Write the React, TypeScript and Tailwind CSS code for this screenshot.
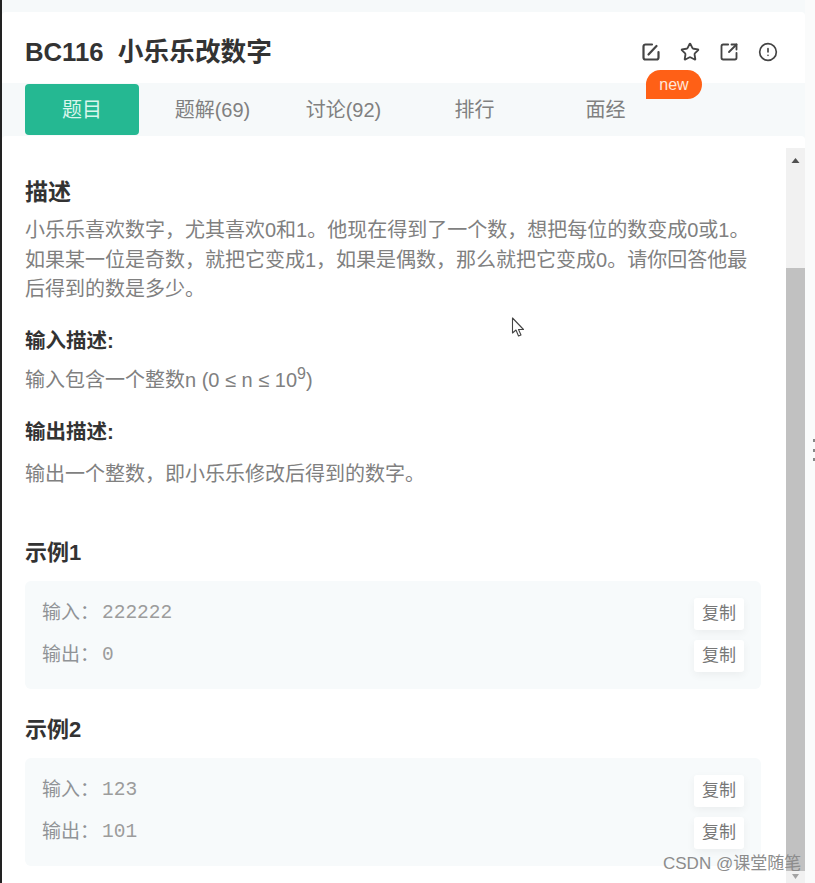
import { Star, SquareArrowOutUpRight, CircleAlert } from 'lucide-react';

const font = { fontFamily: '"Liberation Sans", "Noto Sans CJK SC", sans-serif' };

const tabs = ['题解(69)', '讨论(92)', '排行', '面经'];

const EditIcon = () => (
  <svg viewBox="0 0 20 20" className="h-[20px] w-[20px]" fill="none" stroke="currentColor" strokeWidth="2.200" strokeLinecap="round" strokeLinejoin="round">
    <path d="M11 2.500 H4.500 a2 2 0 0 0 -2 2 V15.500 a2 2 0 0 0 2 2 H15.500 a2 2 0 0 0 2 -2 V10" />
    <path d="M7.500 12.500 L15.500 4" />
  </svg>
);

const SampleRow = ({ label, value }: { label: string; value: string }) => (
  <div className="flex h-[42px] items-center justify-between">
    <div className="flex items-center text-[19px] text-[#909396]">
      <span className="w-[60px]">{label}：</span>
      <span className="font-['Liberation_Mono',monospace] text-[19.500px] text-[#9c9c9c]">{value}</span>
    </div>
    <button className="h-[32px] w-[50px] rounded-[3px] bg-white text-[17px] text-[#777] shadow-[0_3px_8px_rgba(0,0,0,0.05)]">
      复制
    </button>
  </div>
);

const Sample = ({ title, input, output }: { title: string; input: string; output: string }) => (
  <div>
    <h3 className="text-[22px] leading-[28px] font-bold text-[#333]">{title}</h3>
    <div className="mt-[14px] rounded-[6px] bg-[#f7fafb] pt-[12px] pb-[12px] pl-[17px] pr-[17px]">
      <SampleRow label="输入" value={input} />
      <SampleRow label="输出" value={output} />
    </div>
  </div>
);

export default function App() {
  return (
    <div style={font} className="relative h-[883px] w-[815px] overflow-hidden bg-[#fafbfb]">
      <div className="mr-[10px] flex h-full flex-col border-l-2 border-[#222] bg-[#f6f9fa] pt-[12px]">
        {/* title bar */}
        <div className="relative flex h-[71px] shrink-0 items-center justify-between rounded-t-[4px] bg-white pl-[23px] pr-[27px] pt-[9px]">
          <h1 className="text-[25.700px] font-bold text-[#333]">BC116&nbsp; 小乐乐改数字</h1>
          <div className="flex items-center gap-[19px] text-[#444]">
            <EditIcon />
            <Star size={20} strokeWidth={2.200} />
            <SquareArrowOutUpRight size={20} strokeWidth={2.200} />
            <CircleAlert size={20} strokeWidth={2} />
          </div>
          <span className="absolute left-[644px] top-[58px] z-10 flex h-[29px] w-[56px] items-center justify-center rounded-t-[15px] rounded-br-[15px] bg-[#ff6016] text-[16px] text-[#ffe6d8]">
            new
          </span>
        </div>

        {/* tabs */}
        <div className="flex h-[53px] shrink-0 items-stretch pl-[23px]">
          <div className="my-[1px] flex w-[114px] items-center justify-center rounded-[4px] bg-[#25b892] text-[20px] text-[#d9f5ec]">
            题目
          </div>
          <div className="ml-[8px] flex text-[20px] text-[#808080]">
            {tabs.map((t) => (
              <div key={t} className="flex w-[131px] items-center justify-center">
                {t}
              </div>
            ))}
          </div>
        </div>

        {/* description panel */}
        <div className="flex min-h-0 flex-1 rounded-t-[4px] bg-white pt-[12px]">
          <div className="min-w-0 flex-1 pl-[23px] pr-[25px] pt-[30px]">
            <h2 className="text-[23px] leading-[28px] font-bold text-[#333]">描述</h2>
            <p className="mt-[10px] text-[20px] leading-[29.500px] text-[#808080]">
              小乐乐喜欢数字，尤其喜欢0和1。他现在得到了一个数，想把每位的数变成0或1。如果某一位是奇数，就把它变成1，如果是偶数，那么就把它变成0。请你回答他最后得到的数是多少。
            </p>
            <h4 className="mt-[23px] text-[20.500px] leading-[26px] font-bold text-[#333]">输入描述:</h4>
            <p className="mt-[11px] text-[20px] leading-[30px] text-[#808080]">
              输入包含一个整数n (0 ≤ n ≤ 10<sup className="text-[16px]">9</sup>)
            </p>
            <h4 className="mt-[24px] text-[20.500px] leading-[26px] font-bold text-[#333]">输出描述:</h4>
            <p className="mt-[14px] text-[20px] leading-[30px] text-[#808080]">输出一个整数，即小乐乐修改后得到的数字。</p>
            <div className="mt-[50px] flex flex-col gap-[27px]">
              <Sample title="示例1" input="222222" output="0" />
              <Sample title="示例2" input="123" output="101" />
            </div>
          </div>

          {/* scrollbar */}
          <div className="flex w-[19px] shrink-0 flex-col bg-[#f1f1f1]">
            <svg viewBox="0 0 19 30" className="mt-[-1px] h-[30px] w-[19px] shrink-0">
              <path d="M9.500 11 L13.500 16 L5.500 16 Z" fill="#505050" />
            </svg>
            <div className="mt-[91px] flex-1 bg-[#c1c1c1]" />
            <svg viewBox="0 0 19 12" className="h-[12px] w-[19px] shrink-0 bg-[#f1f1f1]">
              <path d="M9.500 8 L13 3 L6 3 Z" fill="#a3a3a3" />
            </svg>
          </div>
        </div>
      </div>

      {/* pointer from the recording */}
      <svg viewBox="0 0 16 22" className="absolute left-[511px] top-[317px] h-[22px] w-[16px]">
        <path d="M1.500 1 L1.500 16 L5 13 L7.500 19 L10 18 L7.500 12.500 L12.500 12.500 Z" fill="#fff" stroke="#444" strokeWidth="1.100" strokeLinejoin="round" />
      </svg>

      {/* splitter handle */}
      <div className="absolute left-[813px] top-[439px] flex h-[22px] w-[2px] flex-col justify-between">
        <span className="h-[3px] w-[2px] bg-[#888]" />
        <span className="h-[3px] w-[2px] bg-[#888]" />
        <span className="h-[3px] w-[2px] bg-[#888]" />
      </div>

      {/* watermark */}
      <span className="absolute left-[663px] top-[853px] text-[17px] leading-[22px] text-[#8c8c8c]">CSDN @课堂随笔</span>
    </div>
  );
}
